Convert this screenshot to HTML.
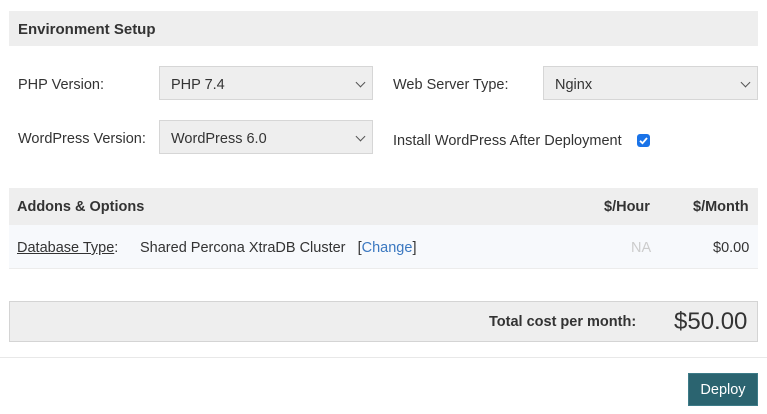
<!DOCTYPE html>
<html><head><style>
body{margin:0;width:767px;height:414px;background:#fff;font-family:"Liberation Sans",sans-serif;color:#333;position:relative;overflow:hidden}
.a{position:absolute}
.hdr{background:#eeeeee}
.sel{background:#eeeeee;border:1px solid #d6d6d6;box-sizing:border-box;font-size:14.5px;line-height:36px;padding-left:11px;color:#333}
.chev{position:absolute;right:8px;top:12px;width:6px;height:6px;border-right:1px solid #555;border-bottom:1px solid #555;transform:rotate(45deg)}
.lbl{font-size:14.5px}
</style></head><body>
<div class="a hdr" style="left:9px;top:11px;width:749px;height:35px"></div>
<div class="a" style="left:18px;top:21px;font-size:15px;font-weight:bold;color:#333">Environment Setup</div>

<div class="a lbl" style="left:18px;top:77px">PHP Version:</div>
<div class="a sel" style="left:159px;top:66px;width:214px;height:34px">PHP 7.4<span class="chev"></span></div>
<div class="a lbl" style="left:393px;top:77px">Web Server Type:</div>
<div class="a sel" style="left:543px;top:66px;width:215px;height:34px">Nginx<span class="chev"></span></div>

<div class="a lbl" style="left:18px;top:131px">WordPress Version:</div>
<div class="a sel" style="left:159px;top:120px;width:214px;height:34px">WordPress 6.0<span class="chev"></span></div>
<div class="a lbl" style="left:393px;top:133px">Install WordPress After Deployment</div>
<div class="a" style="left:637px;top:134px;width:13px;height:13px;background:#1a73e8;border-radius:3px"><svg width="13" height="13"><path d="M3 6.8 L5.5 9.2 L10 4" stroke="#fff" stroke-width="1.8" fill="none"/></svg></div>

<div class="a hdr" style="left:9px;top:188px;width:749px;height:37px"></div>
<div class="a" style="left:17px;top:199px;font-size:14.5px;font-weight:bold">Addons &amp; Options</div>
<div class="a" style="left:604px;top:199px;font-size:14.5px;font-weight:bold">$/Hour</div>
<div class="a" style="left:693px;top:199px;font-size:14.5px;font-weight:bold">$/Month</div>
<div class="a" style="left:9px;top:225px;width:749px;height:43px;background:#f7f9fc;border-bottom:1px solid #ececec"></div>
<div class="a lbl" style="left:17px;top:240px"><u>Database Type</u>:</div>
<div class="a lbl" style="left:140px;top:240px">Shared Percona XtraDB Cluster&nbsp;&nbsp;&nbsp;[<span style="color:#3b78c0">Change</span>]</div>
<div class="a lbl" style="left:631px;top:240px;color:#ccc">NA</div>
<div class="a lbl" style="left:713px;top:240px">$0.00</div>

<div class="a hdr" style="left:9px;top:301px;width:749px;height:41px;border:1px solid #d4d4d4;box-sizing:border-box"></div>
<div class="a" style="left:489px;top:314px;font-size:14.5px;font-weight:bold">Total cost per month:</div>
<div class="a" style="left:674px;top:308px;font-size:24px;color:#333">$50.00</div>
<div class="a" style="left:0;top:357px;width:767px;height:1px;background:#e8e8e8"></div>
<div class="a" style="left:688px;top:373px;width:70px;height:33px;background:#2b6470;border:1px solid #3d7b88;box-sizing:border-box;color:#fff;font-size:14.5px;text-align:center;line-height:33px">Deploy</div>
</body></html>
